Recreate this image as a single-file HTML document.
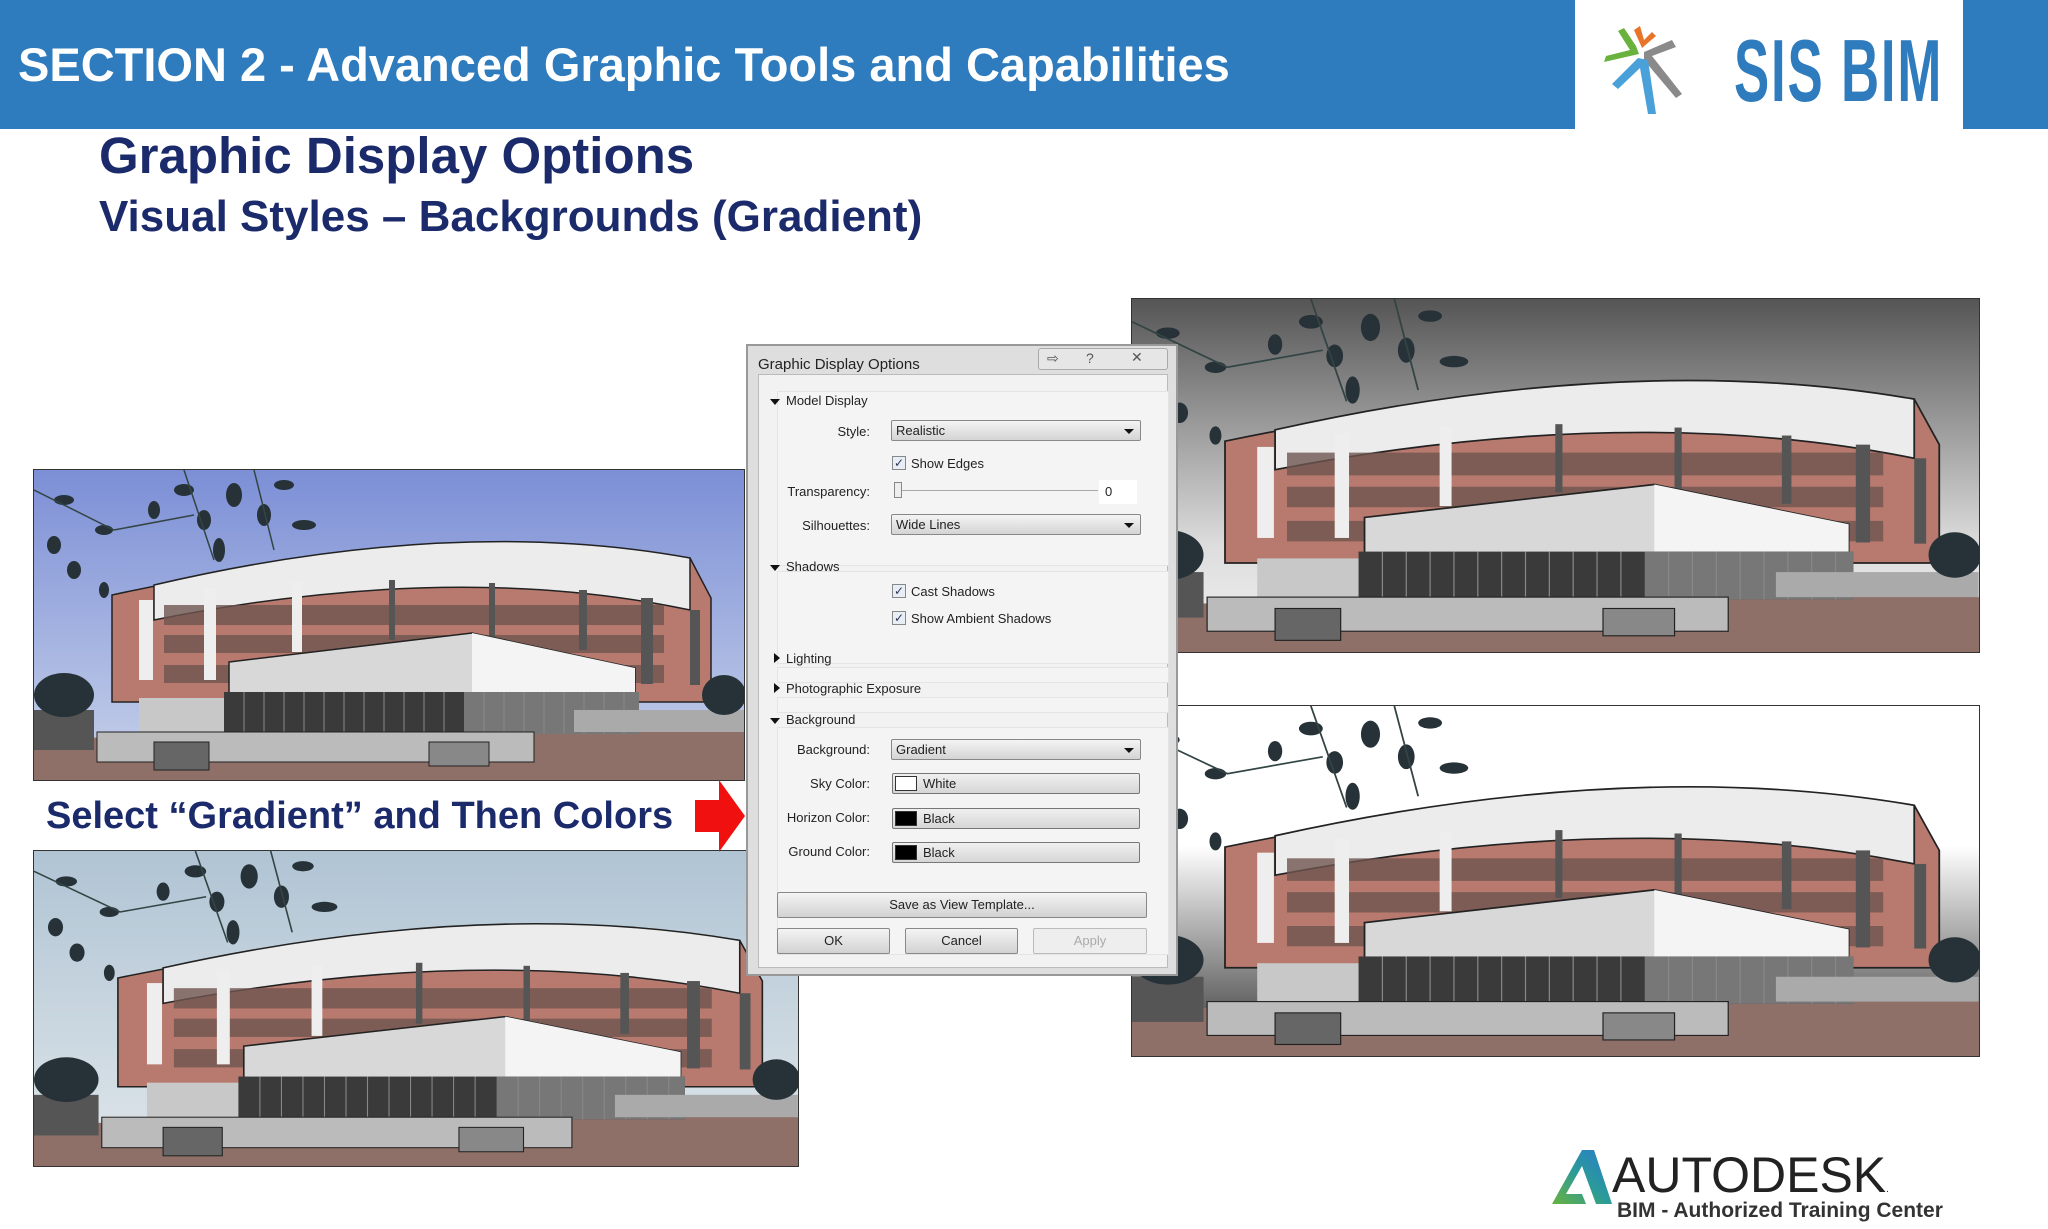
<!DOCTYPE html>
<html><head><meta charset="utf-8">
<style>
*{margin:0;padding:0;box-sizing:border-box}
body{width:2048px;height:1229px;background:#fff;position:relative;overflow:hidden;font-family:"Liberation Sans",sans-serif}
.abs{position:absolute}
.hdr{left:0;top:0;width:1575px;height:129px;background:#2e7bbd}
.hdr2{left:1963px;top:0;width:85px;height:129px;background:#2e7bbd}
.htxt{left:18px;top:37px;color:#fff;font-size:47px;font-weight:bold;white-space:nowrap}
.t1{left:99px;top:126px;color:#1b2a6b;font-size:51px;font-weight:bold;white-space:nowrap}
.t2{left:99px;top:192px;color:#1b2a6b;font-size:44px;font-weight:bold;white-space:nowrap}
.img{border:1px solid #333}
.dlg{left:746px;top:344px;width:432px;height:632px;background:#dedede;border:2px solid #999;font-size:13px;color:#222}
.dlg .a{position:absolute;white-space:nowrap}
.panel{position:absolute;left:10px;top:28px;width:410px;height:594px;background:#f2f2f2;border:1px solid #bbb}
.sec{position:absolute;left:18px;width:392px;border:1px solid #e4e4e4;background:#f4f4f4}
.lbl{position:absolute;right:306px;text-align:right;white-space:nowrap}
.dd{position:absolute;left:143px;width:250px;height:21px;border:1px solid #888;border-radius:2px;background:linear-gradient(#f4f4f4,#d4d4d4);padding-left:4px;line-height:19px}
.dd:after{content:"";position:absolute;right:6px;top:8px;border:5px solid transparent;border-top:5px solid #111;border-bottom:0}
.cb{position:absolute;left:144px;width:14px;height:14px;border:1px solid #888;background:#e8eef6;font-size:12px;line-height:12px;text-align:center;color:#335}
.sw{position:absolute;left:144px;width:248px;height:21px;border:1px solid #777;border-radius:2px;background:linear-gradient(#f0f0f0,#d6d6d6);padding-left:30px;line-height:19px}
.sw i{position:absolute;left:2px;top:2px;width:22px;height:15px;border:1px solid #333}
.btn{position:absolute;height:26px;border:1px solid #888;border-radius:2px;background:linear-gradient(#f4f4f4,#d2d2d2);text-align:center;line-height:24px}
.tri{display:inline-block;width:0;height:0;border:5px solid transparent;margin-right:6px}
.down{border-top:6px solid #111;border-bottom:0;vertical-align:middle}
.right{border-left:6px solid #111;border-right:0}
</style></head><body>
<svg width="0" height="0" style="position:absolute">
<defs>
<symbol id="bld" viewBox="0 0 712 312" preserveAspectRatio="none">
 <path d="M0 270 Q350 255 712 262 L712 312 L0 312Z" fill="#8e7068"/>
 <path d="M78 125 Q400 55 656 88 L677 128 L677 232 L78 232Z" fill="#b87a6e" stroke="#222" stroke-width="1.5"/>
 <path d="M120 115 Q420 45 656 88 L656 140 Q420 90 120 150Z" fill="#ececec" stroke="#222" stroke-width="1.5"/>
 <g fill="#6f5550" opacity=".8">
  <rect x="130" y="135" width="500" height="20"/><rect x="130" y="165" width="500" height="18"/><rect x="130" y="195" width="500" height="18"/>
 </g>
 <g fill="#eee"><rect x="105" y="130" width="14" height="80"/><rect x="170" y="118" width="12" height="92"/><rect x="258" y="112" width="10" height="70"/></g>
 <g fill="#555"><rect x="355" y="110" width="6" height="60"/><rect x="455" y="113" width="6" height="55"/><rect x="545" y="120" width="8" height="60"/><rect x="607" y="128" width="12" height="86"/><rect x="656" y="140" width="10" height="75"/></g>
 <path d="M195 192 L438 163 L601 198 L601 228 L195 228Z" fill="#d8d8d8" stroke="#222" stroke-width="1.5"/>
 <path d="M438 163 L601 198 L601 228 L438 222Z" fill="#f4f4f4"/>
 <rect x="105" y="228" width="90" height="34" fill="#c8c8c8"/>
 <rect x="190" y="222" width="415" height="42" fill="#3a3a3a"/>
 <rect x="430" y="222" width="175" height="42" fill="#777"/>
 <g stroke="#888" stroke-width="1"><path d="M210 222v42M230 222v42M250 222v42M270 222v42M290 222v42M310 222v42M330 222v42M350 222v42M370 222v42M390 222v42M410 222v42M450 222v42M470 222v42M490 222v42M510 222v42M530 222v42M550 222v42M570 222v42M590 222v42"/></g>
 <rect x="540" y="240" width="170" height="22" fill="#aaa"/>
 <rect x="63" y="262" width="437" height="30" fill="#bbb" stroke="#222"/>
 <rect x="120" y="272" width="55" height="28" fill="#666" stroke="#222"/>
 <rect x="395" y="272" width="60" height="24" fill="#888" stroke="#222"/>
 <rect x="0" y="240" width="60" height="40" fill="#555"/>
 <g fill="#263238">
  <ellipse cx="30" cy="30" rx="10" ry="5"/><ellipse cx="70" cy="60" rx="9" ry="5"/><ellipse cx="150" cy="20" rx="10" ry="6"/><ellipse cx="170" cy="50" rx="7" ry="10"/><ellipse cx="200" cy="25" rx="8" ry="12"/><ellipse cx="230" cy="45" rx="7" ry="11"/><ellipse cx="250" cy="15" rx="10" ry="5"/><ellipse cx="20" cy="75" rx="7" ry="9"/><ellipse cx="40" cy="100" rx="7" ry="9"/><ellipse cx="70" cy="120" rx="5" ry="8"/><ellipse cx="270" cy="55" rx="12" ry="5"/><ellipse cx="120" cy="40" rx="6" ry="9"/><ellipse cx="185" cy="80" rx="6" ry="12"/>
  <ellipse cx="30" cy="225" rx="30" ry="22"/><ellipse cx="690" cy="225" rx="22" ry="20"/>
 </g>
 <path d="M0 20 L80 60 L160 45 M150 0 L180 90 M220 0 L240 80" stroke="#344" stroke-width="1.5" fill="none"/>
</symbol>
</defs></svg>

<div class="abs hdr"></div><div class="abs hdr2"></div>
<div class="abs htxt">SECTION 2 - Advanced Graphic Tools and Capabilities</div>
<svg class="abs" style="left:1604px;top:22px" width="90" height="95" viewBox="0 0 90 95">
 <path d="M0 40 L35 32 L32 24 L20 6 L14 9 L26 28 L2 34Z" fill="#6ab23e"/>
 <path d="M30 8 L38 26 L52 14 L48 10 L40 18 L36 4Z" fill="#e8742a"/>
 <path d="M40 30 L68 18 L72 25 L48 34 L78 72 L72 76 L40 38Z" fill="#8a8a8a"/>
 <path d="M34 36 L8 62 L14 67 L36 46 L44 92 L52 92 L44 38Z" fill="#4aa0d8"/>
</svg>
<div class="abs" style="left:1734px;top:20px;color:#2e7bbd;font-size:88px;font-weight:bold;letter-spacing:3px;white-space:nowrap;transform:scaleX(.6);transform-origin:left">SIS BIM</div>

<div class="abs t1">Graphic Display Options</div>
<div class="abs t2">Visual Styles – Backgrounds (Gradient)</div>

<svg class="abs img" style="left:33px;top:469px;background:linear-gradient(#7c8fd6,#c8d2ea)" width="712" height="312"><use href="#bld" width="712" height="312"/></svg>
<svg class="abs img" style="left:33px;top:850px;background:linear-gradient(#b0c4d4,#dfe6ea)" width="766" height="317"><use href="#bld" width="766" height="317"/></svg>
<svg class="abs img" style="left:1131px;top:298px;background:linear-gradient(#555,#ddd 70%,#f2f2f2)" width="849" height="355"><use href="#bld" width="849" height="355"/></svg>
<svg class="abs img" style="left:1131px;top:705px;background:linear-gradient(#fff,#fff 40%,#333)" width="849" height="352"><use href="#bld" width="849" height="352"/></svg>

<div class="abs" style="left:38px;top:790px;width:660px;height:56px;background:#fff"></div>
<div class="abs" style="left:46px;top:795px;color:#1b2a6b;font-size:38px;font-weight:bold;white-space:nowrap">Select “Gradient” and Then Colors</div>
<svg class="abs" style="left:695px;top:780px" width="50" height="72" viewBox="0 0 50 72"><path d="M0 20 H24 V0 L50 36 L24 72 V52 H0Z" fill="#f01010"/></svg>

<div class="abs dlg">
 <div class="a" style="left:10px;top:10px;font-size:15px">Graphic Display Options</div>
 <div class="a" style="left:290px;top:2px;width:130px;height:22px;border:1px solid #aaa;border-radius:3px;background:#e6e6e6;font-size:14px;color:#555">
  <span class="a" style="left:8px;top:1px">⇨</span><span class="a" style="left:47px;top:1px">?</span><span class="a" style="left:92px;top:0">✕</span>
 </div>
 <div class="panel">
  <div class="sec" style="top:16px;height:175px"></div>
  <div class="sec" style="top:196px;height:93px"></div>
  <div class="sec" style="top:292px;height:16px"></div>
  <div class="sec" style="top:322px;height:16px"></div>
  <div class="sec" style="top:352px;height:228px"></div>
 </div>
 <div class="a" style="left:22px;top:47px"><span class="tri down"></span>Model Display</div>
 <div class="lbl" style="top:78px">Style:</div>
 <div class="dd" style="top:74px">Realistic</div>
 <div class="cb" style="top:110px">✓</div><div class="a" style="left:163px;top:110px">Show Edges</div>
 <div class="lbl" style="top:138px">Transparency:</div>
 <div class="a" style="left:150px;top:144px;width:200px;height:1px;background:#aaa"></div>
 <div class="a" style="left:146px;top:136px;width:8px;height:16px;border:1px solid #888;background:#eee"></div>
 <div class="a" style="left:351px;top:134px;width:38px;height:24px;background:#fff;padding:4px 6px">0</div>
 <div class="lbl" style="top:172px">Silhouettes:</div>
 <div class="dd" style="top:168px">Wide Lines</div>
 <div class="a" style="left:22px;top:213px"><span class="tri down"></span>Shadows</div>
 <div class="cb" style="top:238px">✓</div><div class="a" style="left:163px;top:238px">Cast Shadows</div>
 <div class="cb" style="top:265px">✓</div><div class="a" style="left:163px;top:265px">Show Ambient Shadows</div>
 <div class="a" style="left:26px;top:305px"><span class="tri right"></span>Lighting</div>
 <div class="a" style="left:26px;top:335px"><span class="tri right"></span>Photographic Exposure</div>
 <div class="a" style="left:22px;top:366px"><span class="tri down"></span>Background</div>
 <div class="lbl" style="top:396px">Background:</div>
 <div class="dd" style="top:393px">Gradient</div>
 <div class="lbl" style="top:430px">Sky Color:</div>
 <div class="sw" style="top:427px"><i style="background:#fff"></i>White</div>
 <div class="lbl" style="top:464px">Horizon Color:</div>
 <div class="sw" style="top:462px"><i style="background:#000"></i>Black</div>
 <div class="lbl" style="top:498px">Ground Color:</div>
 <div class="sw" style="top:496px"><i style="background:#000"></i>Black</div>
 <div class="btn" style="left:29px;top:546px;width:370px">Save as View Template...</div>
 <div class="btn" style="left:29px;top:582px;width:113px">OK</div>
 <div class="btn" style="left:157px;top:582px;width:113px">Cancel</div>
 <div class="btn" style="left:285px;top:582px;width:114px;background:#eee;color:#aaa;border-color:#bbb">Apply</div>
</div>

<svg class="abs" style="left:1552px;top:1148px" width="60" height="58" viewBox="0 0 60 58">
 <defs><linearGradient id="ag" x1="0" y1="1" x2="1" y2="0"><stop offset="0" stop-color="#6ab23e"/><stop offset=".5" stop-color="#2a9a9a"/><stop offset="1" stop-color="#2a7ad0"/></linearGradient></defs>
 <path d="M0 56 L30 2 L42 2 L60 56 L44 56 L30 18 L14 46 L30 46 L34 56Z" fill="url(#ag)"/>
</svg>
<div class="abs" style="left:1612px;top:1146px;font-size:50px;color:#222;white-space:nowrap">AUTODESK<span style="font-size:10px">.</span></div>
<div class="abs" style="left:1617px;top:1199px;font-size:21px;font-weight:bold;color:#333;white-space:nowrap">BIM - Authorized Training Center</div>
</body></html>
